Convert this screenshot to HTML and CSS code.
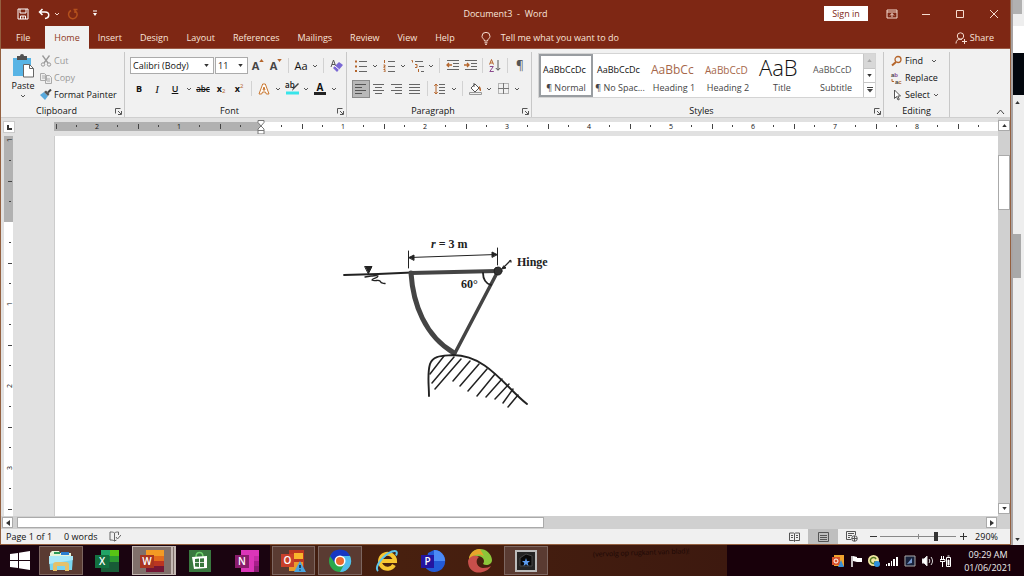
FILE: index.html
```html
<!DOCTYPE html>
<html lang="en">
<head>
<meta charset="utf-8">
<title>Document3 - Word</title>
<link rel="stylesheet" href="styles.css">
</head>
<body>
<svg class="symbols" aria-hidden="true">
  <symbol id="chev" viewBox="0 0 6 4"><path d="M1 1l2 2 2-2" fill="none" stroke="currentColor"/></symbol>
  <symbol id="up" viewBox="0 0 6 4"><path d="M0 4l3-4 3 4z" fill="currentColor"/></symbol>
  <symbol id="down" viewBox="0 0 6 4"><path d="M0 0h6l-3 4z" fill="currentColor"/></symbol>
  <symbol id="launch" viewBox="0 0 7 7"><path d="M.5 5.500V.5h5M3 3l3 3M6.500 3v3.500H3" fill="none" stroke="#555"/></symbol>
</svg>
<div class="desktop">
  <main class="window">
    <header class="titlebar">
      <div class="quick">
        <button aria-label="Save"><svg width="12" height="12" viewBox="0 0 12 12" fill="none" stroke="#fff"><path d="M1 1h10v10H1zM3 1v4h6V1M3.500 11V8h5v3M6 8v3"/></svg></button>
        <button aria-label="Undo"><svg width="12" height="12" viewBox="0 0 12 12" fill="none" stroke="#fff" stroke-width="1.500"><path d="M4.500 1L1.500 4l3 3M2 4h5c5 0 5 6 0 6.500"/></svg></button>
        <svg class="chev pale" aria-hidden="true"><use href="#chev"/></svg>
        <button aria-label="Repeat"><svg width="12" height="12" viewBox="0 0 12 12" fill="none" stroke="#b4501c" stroke-width="1.500"><path d="M4 2.500a4.300 4.300 0 1 0 4.500.5M6.500 1.500h4M8 1v4"/></svg></button>
        <button class="customize" aria-label="Customize"><svg width="6" height="7" viewBox="0 0 6 7"><path d="M1 1h4" stroke="#fff"/><path d="M1 3h4L3 6z" fill="#fff"/></svg></button>
      </div>
      <h1>Document3&nbsp; -&nbsp; Word</h1>
      <div class="caption">
        <button class="signin">Sign in</button>
        <button aria-label="Ribbon display options"><svg width="12" height="10" viewBox="0 0 12 10" fill="none" stroke="#f6dcd0"><path d="M1 1h10v8H1zM1 3h10M6 8V4.500M4 6.500l2-2 2 2"/></svg></button>
        <button aria-label="Minimize"><svg width="10" height="10" stroke="#f6dcd0"><path d="M1 5.500h8"/></svg></button>
        <button aria-label="Maximize"><svg width="10" height="10" fill="none" stroke="#f6dcd0"><path d="M1.500 1.500h7v7h-7z"/></svg></button>
        <button aria-label="Close"><svg width="10" height="10" stroke="#f6dcd0"><path d="M1 1l8 8M9 1L1 9"/></svg></button>
      </div>
    </header>
    <nav class="tabs">
      <button class="file">File</button><button class="active">Home</button><button>Insert</button><button>Design</button><button>Layout</button><button>References</button><button>Mailings</button><button>Review</button><button>View</button><button>Help</button>
      <button class="tell"><svg width="10" height="13" viewBox="0 0 10 13" fill="none" stroke="#f6dcd0"><path d="M3.500 9C3.500 7 1 6.500 1 4.300a4 4 0 0 1 8 0C9 6.500 6.500 7 6.500 9zM3.500 10.800h3M4 12.300h2"/></svg>Tell me what you want to do</button>
      <button class="share"><svg width="12" height="12" viewBox="0 0 12 12" fill="none" stroke="#f6dcd0"><circle cx="5.500" cy="4" r="3.200"/><path d="M1 11.500c0-3 2-4.300 4-4.300 1 0 1.500.2 2 .6M9.500 7v5M7 9.500h5"/></svg>Share</button>
    </nav>

    <div class="ribbon">
      <section class="group clipboard">
        <div class="content">
          <button class="paste">
            <svg width="23" height="24" viewBox="0 0 23 24"><path d="M1 4h18v18H1z" fill="#58b4e5"/><path d="M5 2h3a2 2 0 0 1 4 0h3v4H5z" fill="#505050"/><path d="M11.500 10.500h6l4 4v8.500h-10z" fill="#fff" stroke="#666"/><path d="M17.500 10.500v4h4" fill="none" stroke="#666"/></svg>
            <span>Paste</span>
            <svg class="chev"><use href="#chev"/></svg>
          </button>
          <div class="stack">
            <button disabled><svg width="12" height="12" viewBox="0 0 12 12" fill="none" stroke="#999"><path d="M2.500.5L8 8M9.500.5L4 8" stroke-width="1.300"/><circle cx="3" cy="9.500" r="1.700"/><circle cx="9" cy="9.500" r="1.700"/></svg>Cut</button>
            <button disabled><svg width="12" height="12" viewBox="0 0 12 12" fill="#eee" stroke="#aaa"><path d="M.5 1.500h4l2 2v5h-6zM2 4h3M2 6h3M5.500 3.500h4l2 2v6h-6zM7 7h3M7 9h3"/></svg>Copy</button>
            <button><svg width="12" height="12" viewBox="0 0 12 12"><path d="M0 6l4-3 4 4-3 4z" fill="#58a9dc"/><path d="M4 3l2-1.500L9.500 5 8 7z" fill="#555"/><path d="M8 3.500L11 .5" stroke="#444" stroke-width="2"/></svg>Format Painter</button>
          </div>
        </div>
        <footer><h2>Clipboard</h2><button aria-label="Clipboard options"><svg width="7" height="7"><use href="#launch"/></svg></button></footer>
      </section>

      <section class="group font">
        <div class="content rows">
          <div class="tools">
            <label class="combo family"><input aria-label="Font" value="Calibri (Body)"><svg class="tri"><use href="#down"/></svg></label>
            <label class="combo size"><input aria-label="Font size" value="11"><svg class="tri"><use href="#down"/></svg></label>
            <button class="t grow" aria-label="Grow font"><b>A</b><svg class="tri orange"><use href="#up"/></svg></button>
            <button class="t shrink" aria-label="Shrink font"><b>A</b><svg class="tri orange"><use href="#down"/></svg></button>
            <i class="sep"></i>
            <button class="t case">Aa</button><svg class="chev"><use href="#chev"/></svg>
            <i class="sep"></i>
            <button class="t" aria-label="Clear formatting"><svg width="13" height="13" viewBox="0 0 13 13"><path d="M1 8l2.500-7L6 8M2 5.500h3" fill="none" stroke="#555"/><path d="M3 9l6-6 4 3-6 7z" fill="#7a68d4"/><path d="M5 7l4 3.500" stroke="#fff"/></svg></button>
          </div>
          <div class="tools">
            <button class="t"><b>B</b></button>
            <button class="t it"><i>I</i></button>
            <button class="t"><u>U</u></button><svg class="chev"><use href="#chev"/></svg>
            <button class="t strike"><s>abc</s></button>
            <button class="t sub"><b>x</b><small>2</small></button>
            <button class="t sup"><b>x</b><small>2</small></button>
            <i class="sep"></i>
            <button class="t" aria-label="Text effects"><svg width="12" height="12" viewBox="0 0 12 12" fill="#fff" stroke="#c9772f"><path d="M1 11L4.700 1h2.600L11 11H8.300l-.8-2h-3l-.8 2zM5 7h2L6 4z"/></svg></button><svg class="chev"><use href="#chev"/></svg>
            <button class="t mark" aria-label="Highlight"><em>ab</em><svg width="13" height="13" viewBox="0 0 13 13"><path d="M0 9.500h13v3H0z" fill="#38e5ea"/><path d="M6 9l1-3 5-5 1 1-5 5z" fill="#444"/></svg></button><svg class="chev"><use href="#chev"/></svg>
            <button class="t color" aria-label="Font color"><b>A</b></button><svg class="chev"><use href="#chev"/></svg>
          </div>
        </div>
        <footer><h2>Font</h2><button aria-label="Font options"><svg width="7" height="7"><use href="#launch"/></svg></button></footer>
      </section>

      <section class="group paragraph">
        <div class="content rows">
          <div class="tools">
            <button class="t" aria-label="Bullets"><svg width="12" height="12" viewBox="0 0 12 12"><path d="M4 1.500h8M4 6.500h8M4 11.500h8" stroke="#666"/><path d="M0 .5h2v2H0zM0 5.500h2v2H0zM0 10h2v2H0z" fill="#b5652b"/></svg></button><svg class="chev"><use href="#chev"/></svg>
            <button class="t" aria-label="Numbering"><svg width="12" height="12" viewBox="0 0 12 12"><path d="M5 1.500h7M5 6.500h7M5 11.500h7" stroke="#666"/><path d="M1.500 0v3M.5 5h1.500v1.500h-1V8h1.500M.5 9.500h1.500V12H.5" fill="none" stroke="#b5652b"/></svg></button><svg class="chev"><use href="#chev"/></svg>
            <button class="t" aria-label="Multilevel list"><svg width="13" height="12" viewBox="0 0 13 12"><path d="M4 1.500h8M8 6.500h5M10 11.500h3" stroke="#666"/><path d="M.5.5h1v2M4 4.500h2v3H4M7.500 9v3" fill="none" stroke="#b5652b"/></svg></button><svg class="chev"><use href="#chev"/></svg>
            <i class="sep"></i>
            <button class="t" aria-label="Decrease indent"><svg width="13" height="11" viewBox="0 0 13 11"><path d="M1 .5h12M7 3.500h6M7 6.500h6M1 9.500h12" stroke="#666"/><path d="M6 5H1M3 3L1 5l2 2" stroke="#b5652b" fill="none" stroke-width="1.300"/></svg></button>
            <button class="t" aria-label="Increase indent"><svg width="13" height="11" viewBox="0 0 13 11"><path d="M1 .5h12M7 3.500h6M7 6.500h6M1 9.500h12" stroke="#666"/><path d="M0 5h5M3 3l2 2-2 2" stroke="#b5652b" fill="none" stroke-width="1.300"/></svg></button>
            <i class="sep"></i>
            <button class="t" aria-label="Sort"><svg width="12" height="13" viewBox="0 0 12 13" fill="none"><path d="M.5 5.500L2.500.5l2 5M1.200 4h2.600" stroke="#b5652b"/><path d="M.8 7.500h3.500l-3.500 5h4" stroke="#8b4b8f"/><path d="M9 1v10M6.800 9L9 11.300 11.200 9" stroke="#555"/></svg></button>
            <i class="sep"></i>
            <button class="t pilcrow">¶</button>
          </div>
          <div class="tools">
            <button class="t on" aria-label="Align left"><svg width="12" height="10" stroke="#555"><path d="M0 .5h11M0 3.500h7M0 6.500h11M0 9.500h7"/></svg></button>
            <button class="t" aria-label="Center"><svg width="12" height="10" stroke="#666"><path d="M0 .5h11M2 3.500h7M0 6.500h11M2 9.500h7"/></svg></button>
            <button class="t" aria-label="Align right"><svg width="12" height="10" stroke="#666"><path d="M0 .5h11M4 3.500h7M0 6.500h11M4 9.500h7"/></svg></button>
            <button class="t" aria-label="Justify"><svg width="12" height="10" stroke="#666"><path d="M0 .5h11M0 3.500h11M0 6.500h11M0 9.500h11"/></svg></button>
            <i class="sep"></i>
            <button class="t" aria-label="Line spacing"><svg width="12" height="12" viewBox="0 0 12 12" fill="none"><path d="M5 1.500h6M5 4.500h6M5 7.500h6M5 10.500h6" stroke="#666"/><path d="M2 1v10M.3 3L2 1l1.700 2M.3 9L2 11l1.700-2" stroke="#b5652b"/></svg></button><svg class="chev"><use href="#chev"/></svg>
            <i class="sep"></i>
            <button class="t" aria-label="Shading"><svg width="13" height="12" viewBox="0 0 13 12"><path d="M2 5l4-4 4 4-4 4z" fill="#fff" stroke="#555"/><path d="M5 0v4" stroke="#555"/><path d="M10 3c2 1 2 3 2 5-2 0-2-2-2-5z" fill="#b5652b"/><path d="M.5 9.500h12v2H.5z" fill="#eee" stroke="#999"/></svg></button><svg class="chev"><use href="#chev"/></svg>
            <button class="t borders" aria-label="Borders"><svg width="11" height="11" fill="none" stroke="#777"><path d="M.5.5h10v10H.5z" stroke-dasharray="1 1"/><path d="M5.500 0v11M0 5.500h11"/></svg></button><svg class="chev"><use href="#chev"/></svg>
          </div>
        </div>
        <footer><h2>Paragraph</h2><button aria-label="Paragraph options"><svg width="7" height="7"><use href="#launch"/></svg></button></footer>
      </section>

      <section class="group styles">
        <div class="content">
          <div class="gallery">
            <button class="style chosen"><span class="sample">AaBbCcDc</span><span>¶ Normal</span></button>
            <button class="style"><span class="sample">AaBbCcDc</span><span>¶ No Spac...</span></button>
            <button class="style"><span class="sample h1">AaBbCc</span><span>Heading 1</span></button>
            <button class="style"><span class="sample h2">AaBbCcD</span><span>Heading 2</span></button>
            <button class="style"><span class="sample title">AaB</span><span>Title</span></button>
            <button class="style"><span class="sample subtitle">AaBbCcD</span><span>Subtitle</span></button>
            <div class="pager">
              <button disabled aria-label="Previous styles"><svg class="tri"><use href="#up"/></svg></button>
              <button aria-label="Next styles"><svg class="tri"><use href="#down"/></svg></button>
              <button aria-label="More styles"><svg width="6" height="6" viewBox="0 0 6 6"><path d="M0 .5h6" stroke="#444"/><path d="M0 2h6L3 5.500z" fill="#444"/></svg></button>
            </div>
          </div>
        </div>
        <footer><h2>Styles</h2><button aria-label="Style options"><svg width="7" height="7"><use href="#launch"/></svg></button></footer>
      </section>

      <section class="group editing">
        <div class="content">
          <div class="stack">
            <button><svg width="12" height="12" viewBox="0 0 12 12" fill="none" stroke="#b5652b"><circle cx="7" cy="4.500" r="3" stroke-width="1.300"/><path d="M5 7L1 10.500" stroke-width="2"/></svg>Find<svg class="chev"><use href="#chev"/></svg></button>
            <button><svg class="replace" width="12" height="14" viewBox="0 0 12 14"><text x="0" y="6">a<tspan class="purple">b</tspan></text><text x="4" y="13">a<tspan class="rust">c</tspan></text><path d="M1 8v2.500h2" fill="none" stroke="#b5652b"/></svg>Replace</button>
            <button><svg width="12" height="12" viewBox="0 0 12 12" fill="#fff" stroke="#555"><path d="M3.500 1v8.500l2-2 1.500 3.500 1.300-.6-1.500-3.400h2.700z"/></svg>Select<svg class="chev near"><use href="#chev"/></svg></button>
          </div>
        </div>
        <footer><h2>Editing</h2></footer>
      </section>
      <button class="collapse" aria-label="Collapse the ribbon"><svg width="9" height="6" fill="none" stroke="#444"><path d="M1 5l3.500-4L8 5"/></svg></button>
    </div>

    <div class="work">
      <div class="sheet-area">
        <div class="hruler">
          <button class="tabstop" aria-label="Tab stop"><svg width="5" height="5"><path d="M1 0v4h4" fill="none" stroke="#333" stroke-width="2"/></svg></button>
          <svg class="hscale" height="16">
            <defs><pattern id="inch" x="207" y="0" width="82" height="16" patternUnits="userSpaceOnUse"><path d="M20 7h1v2h-1zM41 6h1v5h-1zM61 7h1v2h-1z" fill="#444"/></pattern></defs>
            <rect x="0" y="4" width="207" height="9" fill="#b1b1b1"/>
            <rect x="207" y="4" width="100%" height="9" fill="#fff"/>
            <rect width="100%" height="16" fill="url(#inch)"/>
            <g class="num"><text x="43" y="11">2</text><text x="125" y="11">1</text><text x="289" y="11">1</text><text x="371" y="11">2</text><text x="453" y="11">3</text><text x="535" y="11">4</text><text x="617" y="11">5</text><text x="699" y="11">6</text><text x="781" y="11">7</text><text x="863" y="11">8</text></g>
            <path d="M204 2.500h6v2L207 8l3 3v5h-6v-5l3-3-3-3.500zM204 12.500h6" fill="#fff" stroke="#777"/>
          </svg>
        </div>
        <div class="canvas">
          <svg class="vruler" width="9">
            <defs><pattern id="vinch" x="0" y="86" width="9" height="82" patternUnits="userSpaceOnUse"><path d="M5 20h2v1H5zM4 41h4v1H4zM5 61h2v1H5z" fill="#444"/></pattern></defs>
            <rect width="9" height="86" fill="#b1b1b1"/><rect y="86" width="9" height="100%" fill="#fff"/>
            <rect width="9" height="100%" fill="url(#vinch)"/>
            <g class="num"><text transform="translate(8 4) rotate(-90)">1</text><text transform="translate(8 168) rotate(-90)">1</text><text transform="translate(8 250) rotate(-90)">2</text><text transform="translate(8 332) rotate(-90)">3</text></g>
          </svg>
          <article class="page">
            <svg class="figure" width="240" height="200" viewBox="0 0 240 200" fill="none" stroke="#222" stroke-linecap="round" role="img" aria-label="Radial gate">
              <path d="M14 55l34-1 34-1.500" stroke-width="1.800"/>
              <path d="M35 46.500h7l-3.500 7z" fill="#222"/>
              <path d="M35 57l6-1c3 0 6-1 7 0 0 2-5 2-6 4 3 2 6-1 8 1 1 3 3 2 5 2.500" stroke-width="1.300"/>
              <path d="M78.500 31v17M167.500 28v17M80 37.500l86-3"/>
              <path d="M79 37.500l5-2.500v5zM167 34.500l-5-2.500v5z" fill="#222"/>
              <path d="M81 53l86-2" stroke="#444" stroke-width="4"/>
              <path d="M81 53c2 31 14 63 43 80" stroke="#444" stroke-width="5"/>
              <path d="M168 51l-43 82" stroke="#444" stroke-width="3.500"/>
              <circle cx="168" cy="51" r="4" fill="#333"/>
              <path d="M153 53c0 6 3 11 8 12" stroke-width="1.800"/>
              <path d="M173 48l6-6M179 42c1-2 2-2 2 0" stroke-width="1.300"/><path d="M172 49l4-1-2-2z" fill="#222"/>
              <path d="M99 176c0-11-2-22 1-32 3-9 13-8 23-9 34 0 53 33 74 49" stroke-width="1.900"/>
              <path d="M114 136l-14 18M124 137l-22 26M131 139l-26 30M140 141l-17 20M149 144l-19 22M157 149l-19 22M165 154l-18 22M172 159l-16 18M179 164l-14 15M183 169l-10 14M188 175l-10 12" stroke-width="1.500"/>
              <g class="figtext"><text x="101" y="28"><tspan font-style="italic">r</tspan> = 3 m</text><text x="187" y="46">Hinge</text><text x="131" y="68">60°</text></g>
            </svg>
          </article>
        </div>
      </div>
      <div class="vscroll">
        <button aria-label="Scroll up"><svg class="tri"><use href="#up"/></svg></button>
        <div class="thumb"></div>
        <button aria-label="Scroll down"><svg class="tri"><use href="#down"/></svg></button>
      </div>
    </div>
    <div class="hscroll">
      <button aria-label="Scroll left"><svg width="4" height="6"><path d="M4 0v6L0 3z" fill="#333"/></svg></button>
      <div class="thumb"></div>
      <button aria-label="Scroll right"><svg width="4" height="6"><path d="M0 0v6l4-3z" fill="#333"/></svg></button>
    </div>
    <footer class="status">
      <span class="pages">Page 1 of 1</span><span class="words">0 words</span>
      <svg width="12" height="11" viewBox="0 0 12 11" fill="none" stroke="#666"><path d="M5.500 10C4 9 2.500 9 1 9V1c2 0 3.500 0 4.500 1 1-1 2.500-1 4-1v3M5.500 2v8l2-1M7 6l1.500 2L12 4"/></svg>
      <div class="views">
        <button aria-label="Read mode"><svg width="11" height="10" viewBox="0 0 11 10" fill="none" stroke="#555"><path d="M5.500 9.500V1.500M.5 1h4l1 .8 1-.8h4v7.500h-4l-1 .8-1-.8h-4zM2 3.500h2M2 5.500h2M7 3.500h2M7 5.500h2"/></svg></button>
        <button class="current" aria-label="Print layout"><svg width="11" height="10" fill="none" stroke="#555"><path d="M.5.5h10v9H.5zM2 3.500h7M2 5.500h7M2 7.500h7"/></svg></button>
        <button aria-label="Web layout"><svg width="12" height="11" viewBox="0 0 12 11" fill="none" stroke="#555"><path d="M5 8.500H.5v-8h9V4M2 2.500h6M2 4.500h4M2 6.500h2"/><circle cx="8.500" cy="7.500" r="2.800"/><path d="M6 7.500h5M8.500 5v5"/></svg></button>
      </div>
      <button class="zoomstep" aria-label="Zoom out"><svg width="7" height="7" stroke="#333"><path d="M0 3.500h7"/></svg></button>
      <input class="zoom" type="range" min="0" max="100" value="75" aria-label="Zoom">
      <button class="zoomstep" aria-label="Zoom in"><svg width="7" height="7" stroke="#333"><path d="M0 3.500h7M3.500 0v7"/></svg></button>
      <span class="percent">290%</span>
    </footer>
  </main>
  <aside class="behind">
    <div class="grey"></div><div class="pale"></div><div class="white"></div><div class="black"></div>
    <div class="track"><svg class="tri"><use href="#up"/></svg><div class="thumb"></div><svg class="tri"><use href="#down"/></svg></div>
  </aside>
</div>

<footer class="taskbar">
  <button class="start" aria-label="Start"><svg width="20" height="19" viewBox="0 0 20 19" fill="#fff"><path d="M0 3l8-1v7H0zM9 1.800L20 0v9H9zM0 10h8v7l-8-1zM9 10h11v9L9 17.200z"/></svg></button>
  <div class="apps">
    <button class="open" aria-label="File Explorer"><svg width="26" height="24" viewBox="0 0 26 24"><path d="M2 4l2-2h7l1 2h11v5H2z" fill="#e8f4d8"/><path d="M6 3h6v2H6z" fill="#2a9a55"/><path d="M13 3h8v3h-8z" fill="#2b7ed0"/><path d="M1 7h24l-1 14H2z" fill="#7ad5f0"/><path d="M1 7h24v4L1 15z" fill="#a9e8f8"/><path d="M5 22v-6c0-2 1-3 3-3h10c2 0 3 1 3 3v6h-4v-5H9v5z" fill="#e5c169"/></svg></button>
    <button aria-label="Excel"><svg width="26" height="24" viewBox="0 0 26 24"><path d="M7 1h18v22H7z" fill="#185c37"/><path d="M7 1h9v6H7z" fill="#21a366"/><path d="M16 1h9v6h-9z" fill="#58c414"/><path d="M7 7h9v6H7z" fill="#107c41"/><path d="M16 7h9v6h-9z" fill="#2c9b32"/><path d="M1 6h14v13H1z" fill="#137040"/><text x="8" y="16">X</text></svg></button>
    <button class="open focused" aria-label="Word"><svg width="26" height="24" viewBox="0 0 26 24"><path d="M7 1h18v22H7z" fill="#741634"/><path d="M7 1h18v6H7z" fill="#f39a24"/><path d="M7 7h18v5H7z" fill="#e36b1c"/><path d="M7 12h18v5H7z" fill="#bb3521"/><path d="M1 6h14v13H1z" fill="#a93520"/><text x="8" y="16">W</text></svg></button>
    <button aria-label="Store"><svg width="22" height="22" viewBox="0 0 22 22"><path d="M0 0h22v22H0z" fill="#39783f"/><path d="M7 7c0-6 7-6 7 0" fill="none" stroke="#6fd06d" stroke-width="1.500"/><path d="M3 7l15-1v12L5 19z" fill="#fff"/><path d="M6 9l4-.4v3.700H6zM11 8.500l4-.3v4h-4zM6 13h4v4l-4-.5zM11 13h4v4h-4z" fill="#39783f"/></svg></button>
    <button aria-label="OneNote"><svg width="26" height="24" viewBox="0 0 26 24"><path d="M7 1h18v22H7z" fill="#dc35b8"/><path d="M20 7h5v5h-5z" fill="#c52ba4"/><path d="M20 12h5v5h-5z" fill="#a81f8b"/><path d="M20 17h5v6h-5z" fill="#8b1c74"/><path d="M1 6h14v13H1z" fill="#8a1c6c"/><text x="8" y="16">N</text></svg></button>
    <button class="open" aria-label="Outlook"><svg width="26" height="24" viewBox="0 0 26 24"><path d="M9 1h15v20H9z" fill="#bd3720"/><path d="M14 4h9v6h-9z" fill="#f9b52c"/><path d="M9 13h14v9H9z" fill="#e99a2c"/><path d="M1 5h13v13H1z" fill="#c9402a"/><text x="7.500" y="15">O</text><path d="M20 12l6 11H14z" fill="#49a4df"/><path d="M20 16v3M20 20.500v1" stroke="#123" stroke-width="1.500"/></svg></button>
    <button class="open" aria-label="Chrome"><svg width="24" height="24" viewBox="0 0 24 24"><circle cx="12" cy="12" r="11" fill="#2ca84c"/><path d="M2 7a11 11 0 0 1 20 0H12L7 14z" fill="#1738c2"/><path d="M22 7a11 11 0 0 1-10 16l5-9-2-7z" fill="#52bdec"/><circle cx="12" cy="12" r="5.500" fill="#fff"/><circle cx="12" cy="12" r="4" fill="#ec6a2c"/></svg></button>
    <button aria-label="Internet Explorer"><svg width="24" height="24" viewBox="0 0 24 24" fill="none"><path d="M19 16a7.500 7.500 0 1 1 1-4H7" stroke="#f7c631" stroke-width="4"/><path d="M3 22C-1 18 8 6 17 2.500c4-1.500 6 0 4 4" stroke="#60c5ea" stroke-width="2"/></svg></button>
    <button aria-label="Project"><svg width="26" height="24" viewBox="0 0 26 24"><path d="M14 1a11 11 0 1 1-9 17L8 4z" fill="#235bd8"/><path d="M14 1a11 11 0 0 1 11 11H14z" fill="#4c8bf5"/><path d="M1 6h13v13H1z" fill="#2415a0"/><text x="7.500" y="16">P</text></svg></button>
    <button aria-label="Edge"><svg width="26" height="26" viewBox="0 0 26 26"><path d="M13 1a12 12 0 0 1 12 11c0 5-6 6-9 4 3-4-1-8-5-8-4 0-8 2-9 6C1 7 6 1 13 1z" fill="#8cc63a"/><path d="M2 10C4 3 9 1 13 1l4 7c-4-3-12-2-15 5z" fill="#e8a52a"/><path d="M1 13c2-6 8-6 11-4-4 3-3 10 4 11 4 0 6-1 8-2-5 9-23 10-23-5z" fill="#c84f4b"/></svg></button>
    <button class="open" aria-label="Photo viewer"><svg width="22" height="22" viewBox="0 0 22 22"><path d="M1 1h20v20H1z" fill="#242424" stroke="#bbb" stroke-width="2"/><path d="M5 8l6-4 6 2v10H5z" fill="#080808" stroke="#444"/><path d="M11 8l1 3h3l-2.300 2 .8 3-2.500-1.700L8.500 16l.8-3L7 11h3z" fill="#5b9cf0"/></svg></button>
  </div>
  <div class="wallpaper">(vervolg op rugkant van blad)!</div>
  <div class="tray">
    <svg width="12" height="12" viewBox="0 0 12 12"><path d="M2 0h10v11H2z" fill="#f0a22e"/><path d="M0 2h8v8H0z" fill="#d6502a"/><circle cx="4" cy="6" r="2" fill="none" stroke="#fff"/><path d="M9 5l3 7H6z" fill="#3b8fd4"/></svg>
    <svg width="12" height="12" viewBox="0 0 12 12"><path d="M2 1v11" stroke="#fff" stroke-width="1.500"/><path d="M3 1l4 1v1h5v4H7L3 6z" fill="#fff"/></svg>
    <svg width="12" height="12" viewBox="0 0 12 12"><circle cx="5.500" cy="5.500" r="5.500" fill="#f1e7a4"/><path d="M8 4a3 3 0 1 0 0 3H6" fill="none" stroke="#557a22" stroke-width="1.500"/><circle cx="9" cy="9" r="3" fill="#2e8fdc"/></svg>
    <svg width="12" height="12" viewBox="0 0 12 12" fill="#fff"><path d="M0 9h1v2H0zM2 8h2v3H2zM5 6h1v5H5zM7 4h2v7H7zM10 2h2v9h-2z"/></svg>
    <svg width="12" height="12" viewBox="0 0 12 12"><path d="M1 1h10v10H1z" fill="#18223c" stroke="#aaa"/><path d="M3 9l5-6v5z" fill="#7697cc"/></svg>
    <svg width="12" height="12" viewBox="0 0 12 12" fill="none" stroke="#ddd"><path d="M0 4h2l3-3v10L2 8H0z" fill="#fff"/><path d="M7 4c1 1 1 3 0 4M9 2c2 3 2 5 0 8"/></svg>
    <svg width="12" height="12" viewBox="0 0 12 12" fill="none" stroke="#fff"><path d="M6.500 2.500h4v9h-4zM7.500 1h2M1.500 1v3M3.500 1v3M0 4.500h5v2H0zM2.500 6v6"/><path d="M8 5h1v5H8z" fill="#fff"/></svg>
    <div class="clock"><time>09:29 AM</time><time>01/06/2021</time></div>
  </div>
</footer>
</body>
</html>
```
FILE: styles.css
```css
* { box-sizing: border-box; }
body {
  margin: 0;
  height: 100vh;
  display: flex;
  flex-direction: column;
  overflow: hidden;
  font: 9px/12px "Open Sans", "Noto Sans", sans-serif;
  color: #111;
  background: #1a0410;
}
button, input { font: inherit; color: inherit; }
button {
  display: flex;
  align-items: center;
  justify-content: center;
  padding: 0;
  border: 0;
  background: none;
  white-space: nowrap;
}
svg { display: block; flex: none; }
h1, h2 { margin: 0; font: inherit; }
.symbols { position: absolute; width: 0; height: 0; }
.chev { width: 6px; height: 4px; color: #555; }
.chev.pale { color: #f6dcd0; }
.tri { width: 5px; height: 3px; color: #333; }
.tri.orange { color: #b5652b; }

.desktop { flex: 1; display: flex; min-height: 0; }
.window {
  flex: 1;
  min-width: 0;
  display: flex;
  flex-direction: column;
  border: 1px solid #94603f;
  border-top: 0;
  background: #f1f1f1;
}

.titlebar, .tabs { background: #7e2714; color: #f9e4da; }
.titlebar { display: grid; grid-template-columns: 1fr auto 1fr; align-items: center; height: 26px; padding-top: 1px; }
.quick { display: flex; align-items: center; gap: 4px; padding-left: 15px; }
.quick button { width: 13px; }
.quick button:nth-of-type(2) { margin-left: 4px; }
.quick button:nth-of-type(3) { margin-left: 2px; }
.quick .customize { margin-left: 5px; }
.caption { display: flex; align-items: center; justify-content: flex-end; padding-right: 10px; gap: 22px; }
.caption button { width: 12px; }
.caption .signin { width: 44px; height: 15px; margin-right: -4px; background: #fff; color: #7e2714; }

.tabs { display: flex; height: 23px; border-bottom: 1px solid #9b5a45; }
.tabs button { height: 23px; padding: 1px 9px 0; }
.tabs .file { padding: 1px 15px 0; }
.tabs .active { background: #f1f1f1; color: #8f3a1c; }
.tabs .tell { gap: 10px; margin-left: 8px; }
.tabs .share { gap: 3px; margin-left: auto; padding-right: 16px; }

.ribbon { display: flex; height: 69px; border-bottom: 1px solid #cfcfcf; }
.group { display: flex; flex-direction: column; border-right: 1px solid #c8c8c8; margin-top: 3px; }
.content { flex: 1; display: flex; align-items: flex-start; }
.group footer { display: flex; align-items: center; height: 12px; }
.group footer h2 { flex: 1; text-align: center; color: #111; }
.group footer button { width: 12px; height: 12px; }
.clipboard { width: 124px; }
.clipboard .content { padding-left: 10px; gap: 5px; }
.paste { flex-direction: column; gap: 2px; width: 24px; padding-top: 2px; }
.stack { display: flex; flex-direction: column; }
.stack button { justify-content: flex-start; gap: 2px; height: 17px; color: #111; }
.stack button:disabled { color: #999; }
.font { width: 222px; }
.paragraph { width: 185px; }
.styles { width: 352px; }
.editing { width: 66px; }
.editing .stack { padding-left: 7px; }
.editing .chev { margin-left: 6px; }
.editing .near { margin-left: 1px; }
.collapse { margin: auto 5px 2px auto; }

.rows { flex-direction: column; padding-left: 5px; gap: 6px; padding-top: 5px; }
.tools { display: flex; align-items: center; height: 17px; }
.t { position: relative; width: 18px; height: 18px; }
.tools .chev { margin: 0 2px; }
.sep { width: 1px; height: 15px; margin: 0 3px; background: #d2d2d2; }
.combo { display: flex; align-items: center; height: 17px; margin-right: 1px; padding: 0 4px 0 2px; border: 1px solid #ababab; background: #fff; }
.combo input { flex: 1; min-width: 0; width: 0; padding: 0; border: 0; outline: 0; background: none; }
.family { width: 84px; }
.size { width: 33px; }
.grow, .shrink { align-items: center; font-size: 11px; color: #444; }
.grow .tri, .shrink .tri { align-self: flex-start; margin-top: 2px; }
.case { font-size: 11px; }
.it { font-family: "Liberation Serif", serif; font-size: 11px; }
.sub small, .sup small { font-size: 6px; color: #b5652b; }
.sub small { padding-top: 5px; }
.sup small { padding-bottom: 6px; }
.t u { font-weight: 600; }
.strike { font-size: 8px; font-weight: 600; }
.mark em { position: absolute; left: 2px; top: 0; font: 600 8px/10px "Open Sans", sans-serif; }
.color b { width: 12px; height: 13px; border-bottom: 3px solid #222; font-size: 10px; line-height: 10px; }
.pilcrow { font-size: 12px; color: #555; }
.on { border: 1px solid #8a8a8a; background: #b8b8b8; }

.styles .content { padding: 1px 7px 0 6px; }
.gallery { flex: 1; display: flex; height: 45px; border: 1px solid #d4d4d4; background: #fff; }
.style { flex: 1; min-width: 0; flex-direction: column; justify-content: flex-start; padding: 3px 3px 0; overflow: hidden; color: #444; }
.chosen { border: 2px solid #999da1; padding: 1px 1px 0; }
.sample { width: 46px; height: 25px; text-align: left; font-weight: 500; line-height: 26px; color: #111; }
.sample.h1 { font-size: 12px; font-weight: 400; color: #a6674a; }
.sample.h2 { font-size: 10px; font-weight: 400; color: #a6674a; }
.sample.title { font-size: 22px; font-weight: 300; line-height: 20px; }
.sample.subtitle { font-weight: 400; color: #555; }
.pager { width: 12px; display: flex; flex-direction: column; border-left: 1px solid #c6c6c6; }
.pager button { flex: 1; border-bottom: 1px solid #c6c6c6; }
.pager button:disabled { background: #d8d8d8; }
.pager button:disabled svg { color: #aaa; }
.pager button:last-child { border-bottom: 0; }
.replace { font: bold 6px "Liberation Sans", sans-serif; fill: #444; overflow: visible; }
.purple { fill: #8b4b8f; }
.rust { fill: #b5652b; }

.work { flex: 1; display: flex; min-height: 0; background: #e1e1e1; }
.sheet-area { flex: 1; display: flex; flex-direction: column; min-width: 0; }
.hruler { display: flex; height: 18px; padding-left: 2px; }
.tabstop { width: 12px; height: 12px; margin: 3px 39px 0 0; border: 1px solid #cacaca; background: #fff; }
.hscale { flex: 1; min-width: 0; overflow: hidden; }
.num { font: 7px "Open Sans", sans-serif; fill: #111; text-anchor: middle; }
.canvas { flex: 1; display: flex; min-height: 0; padding-left: 3px; }
.vruler { height: 100%; margin-right: 41px; }
.page { flex: 1; min-width: 0; padding: 84px 0 0 275px; border-left: 1px solid #ccc; background: #fff; }
.figtext { font: bold 12px "Liberation Serif", serif; fill: #222; stroke: none; }
.vscroll { display: flex; flex-direction: column; width: 12px; padding: 2px 0; background: #d0d0d0; }
.vscroll button { height: 11px; border: 1px solid #aaa; background: #fff; }
.vscroll .thumb { height: 55px; margin: 24px 0 auto; border: 1px solid #aaa; background: #fff; }
.hscroll { display: flex; align-items: center; height: 13px; padding: 0 13px 0 1px; background: #d0d0d0; }
.hscroll button { width: 11px; height: 11px; border: 1px solid #aaa; background: #fff; }
.hscroll .thumb { width: 53%; height: 11px; margin: 0 auto 0 4px; border: 1px solid #aaa; background: #fff; }

.status { display: flex; align-items: center; height: 15px; padding: 0 12px 0 5px; background: #f0f0f0; }
.words { margin: 0 12px; }
.views { display: flex; align-items: stretch; height: 15px; margin-left: auto; }
.views button { width: 28px; }
.views .current { width: 30px; background: #bfbfbf; }
.zoomstep { width: 8px; margin-left: 3px; }
.zoom { width: 76px; height: 12px; margin: 0 0 0 3px; appearance: none; background: linear-gradient(#888, #888) center / 100% 1px no-repeat, linear-gradient(#888, #888) center / 1px 5px no-repeat; }
.zoom::-webkit-slider-thumb { appearance: none; width: 4px; height: 9px; background: #333; }
.percent { margin-left: 8px; }

.behind { display: flex; flex-direction: column; width: 13px; border-left: 2px solid #a8a3a3; background: #eee; }
.grey { height: 14px; margin-right: 2px; background: #b1b1b1; }
.behind .pale { height: 12px; }
.white { height: 27px; background: #fff; }
.black { height: 42px; background: #02060d; }
.track { flex: 1; display: flex; flex-direction: column; padding: 6px 3px 4px 0; }
.track .tri { margin-left: 2px; }
.track .thumb { height: 44px; margin: 130px 0 auto; background: #a9a9a9; }

.taskbar { display: flex; height: 31px; background: linear-gradient(90deg, #1a0410 270px, #3f1b10 270px, #48200f 400px, #3d190f 727px, #18000a 727px); color: #eee; }
.start { width: 39px; }
.apps { display: grid; grid-template-columns: repeat(11, 1fr); gap: 3px; width: 509px; padding: 1px 0; }
.open { border: 1px solid #7d6660; background: #5a3b32; }
.focused { border: 1px solid #c4b7b2; border-right: 5px double #c4b7b2; background: #80706b; }
.apps text { font: 600 10px "Open Sans", sans-serif; fill: #fff; text-anchor: middle; }
.wallpaper { height: 12px; margin: 2px 0 0 45px; font-size: 7px; color: #1c0806; transform: rotate(-2deg); white-space: nowrap; }
.tray { display: flex; align-items: center; gap: 6px; margin-left: auto; padding-right: 12px; }
.clock { display: flex; flex-direction: column; align-items: center; margin-left: 6px; line-height: 13px; }
```
